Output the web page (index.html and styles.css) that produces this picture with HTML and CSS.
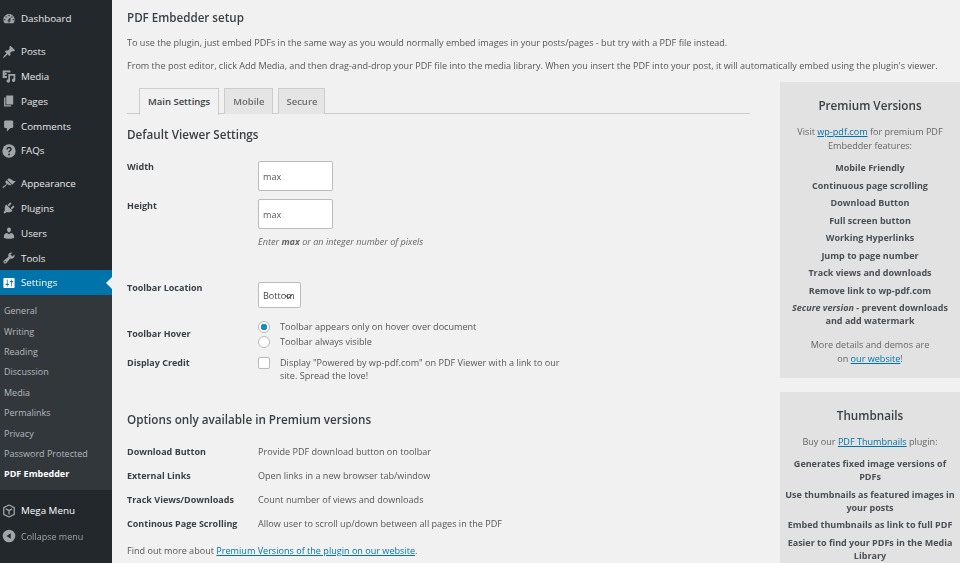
FILE: index.html
```html
<!DOCTYPE html>
<html lang="en">
<head>
<meta charset="utf-8">
<title>PDF Embedder setup</title>
<link rel="stylesheet" href="styles.css">
</head>
<body>
<nav class="sidebar">
  <ul class="menu menu-first">
    <li class="item"><svg class="icon" viewBox="0 0 20 20"><path d="M3.76 16h12.48c1.1-1.37 1.76-3.11 1.76-5 0-4.42-3.58-8-8-8s-8 3.58-8 8c0 1.89.66 3.63 1.76 5zM10 4c.55 0 1 .45 1 1s-.45 1-1 1-1-.45-1-1 .45-1 1-1zM6 6c.55 0 1 .45 1 1s-.45 1-1 1-1-.45-1-1 .45-1 1-1zm8 0c.55 0 1 .45 1 1s-.45 1-1 1-1-.45-1-1 .45-1 1-1zm-5.37 5.55L12 7v6c0 1.1-.9 2-2 2s-2-.9-2-2c0-.57.24-1.08.63-1.45zM4 10c.55 0 1 .45 1 1s-.45 1-1 1-1-.45-1-1 .45-1 1-1zm12 0c.55 0 1 .45 1 1s-.45 1-1 1-1-.45-1-1 .45-1 1-1zm-5 3c0-.55-.45-1-1-1s-1 .45-1 1 .45 1 1 1 1-.45 1-1z"/></svg>Dashboard</li>
  </ul>
  <ul class="menu">
    <li class="item"><svg class="icon" viewBox="0 0 20 20"><path d="M10.44 3.02l1.82-1.82 6.36 6.35-1.83 1.82c-1.05-.68-2.48-.57-3.41.36l-.75.75c-.92.93-1.04 2.35-.35 3.41l-1.83 1.82-2.41-2.41-2.8 2.79c-.42.42-3.38 2.71-3.8 2.29s1.86-3.39 2.28-3.81l2.79-2.79L4.1 9.36l1.83-1.82c1.05.69 2.48.57 3.4-.36l.75-.75c.93-.92 1.05-2.35.36-3.41z"/></svg>Posts</li>
    <li class="item"><svg class="icon" viewBox="0 0 20 20"><path fill-rule="evenodd" d="M1 2h11v3H9V4.500H4V10h3v3H1zM5.500 5.500a1.500 1.500 0 1 1 0 3 1.500 1.500 0 0 1 0-3zM9 7h10v9a2.500 2.500 0 1 1-2.500-2.500V9.500h-5V17a2.500 2.500 0 1 1-2.500-2.500z"/></svg>Media</li>
    <li class="item"><svg class="icon" viewBox="0 0 20 20"><path d="M6 15V2h10v13H6zm-1 1h8v2H3V5h2v11z"/></svg>Pages</li>
    <li class="item"><svg class="icon" viewBox="0 0 20 20"><path d="M5 2h9c1.100 0 2 .9 2 2v7c0 1.100-.9 2-2 2h-2l-5 5v-5H5c-1.100 0-2-.9-2-2V4c0-1.100.9-2 2-2z"/></svg>Comments</li>
    <li class="item"><svg class="icon" viewBox="0 0 20 20"><circle cx="10" cy="10" r="9.500"/><path class="cut" d="M7.300 7.800c0-1.700 1.200-2.700 2.800-2.700s2.700 1 2.700 2.400c0 2.200-2.800 2.100-2.800 4.300"/><circle class="dot" cx="10" cy="15" r="1.300"/></svg>FAQs</li>
  </ul>
  <ul class="menu">
    <li class="item"><svg class="icon" viewBox="0 0 20 20"><path d="M14.480 11.060L7.410 3.990l1.500-1.500c.5-.56 2.300-.47 3.510.32 1.210.8 1.430 1.280 2.910 2.100 1.180.64 2.450 1.260 4.450.85zm-.71.71L6.700 4.700 4.930 6.470c-.39.39-.39 1.020 0 1.410l1.060 1.060c.39.39.39 1.030 0 1.420-.6.6-1.430 1.110-2.210 1.690-.35.26-.7.53-1.010.84C1.430 13.230.4 14.850 1 15.500c.6.6 2.200-.4 3.500-1.780.3-.3.58-.66.84-1.010.58-.78 1.090-1.610 1.690-2.210.39-.39 1.020-.39 1.410 0l1.060 1.060c.39.39 1.020.39 1.410 0z"/></svg>Appearance</li>
    <li class="item"><svg class="icon" viewBox="0 0 20 20"><path d="M13.110 4.360L9.870 7.600 8 5.730l3.240-3.240c.35-.34 1.050-.2 1.560.32.52.51.66 1.210.31 1.550zm-8 1.770l.91-1.120 9.010 9.010-1.190.84c-.71.71-2.630 1.160-3.820 1.160H6.140L4.900 17.260c-.59.59-1.540.59-2.120 0-.59-.58-.59-1.530 0-2.120l1.240-1.240v-3.880c0-1.130.4-3.190 1.090-3.890zm7.260 3.970l3.240-3.240c.34-.35 1.040-.21 1.550.31.52.51.66 1.210.31 1.550l-3.240 3.250z"/></svg>Plugins</li>
    <li class="item"><svg class="icon" viewBox="0 0 20 20"><path d="M10 9.250c-2.270 0-2.730-3.440-2.730-3.440C7 4.020 7.820 2 9.970 2c2.160 0 2.980 2.020 2.710 3.810 0 0-.41 3.440-2.680 3.440zm0 2.570L12.720 10c2.390 0 4.520 2.330 4.520 4.530v2.490s-3.650 1.130-7.240 1.130c-3.650 0-7.240-1.130-7.240-1.130v-2.490c0-2.250 1.940-4.480 4.470-4.480z"/></svg>Users</li>
    <li class="item"><svg class="icon" viewBox="0 0 20 20"><path d="M16.680 9.770c-1.340 1.340-3.300 1.670-4.950.99l-5.410 6.520c-.99.99-2.590.99-3.580 0s-.99-2.590 0-3.570l6.520-5.420c-.68-1.650-.35-3.610.99-4.950 1.280-1.280 3.120-1.620 4.720-1.060l-2.890 2.890 2.820 2.820 2.860-2.870c.53 1.580.18 3.390-1.080 4.650zM3.810 16.210c.4.39 1.040.39 1.430 0 .4-.4.4-1.040 0-1.430-.39-.4-1.030-.4-1.430 0-.39.39-.39 1.030 0 1.430z"/></svg>Tools</li>
    <li class="item item-active"><svg class="icon" viewBox="0 0 20 20"><path fill-rule="evenodd" d="M18 16V4c0-.55-.45-1-1-1H3c-.55 0-1 .45-1 1v12c0 .55.45 1 1 1h14c.55 0 1-.45 1-1zM8 11h1c.55 0 1 .45 1 1s-.45 1-1 1H8v1.500c0 .28-.22.5-.5.5s-.5-.22-.5-.5V13H6c-.55 0-1-.45-1-1s.45-1 1-1h1V5.500c0-.28.22-.5.5-.5s.5.22.5.5V11zm5-2h-1c-.55 0-1-.45-1-1s.45-1 1-1h1V5.500c0-.28.22-.5.5-.5s.5.22.5.5V7h1c.55 0 1 .45 1 1s-.45 1-1 1h-1v5.500c0 .28-.22.5-.5.5s-.5-.22-.5-.5V9z"/></svg>Settings</li>
  </ul>
  <ul class="submenu">
    <li>General</li>
    <li>Writing</li>
    <li>Reading</li>
    <li>Discussion</li>
    <li>Media</li>
    <li>Permalinks</li>
    <li>Privacy</li>
    <li>Password Protected</li>
    <li class="sub-current">PDF Embedder</li>
  </ul>
  <ul class="menu menu-last">
    <li class="item item-bright"><svg class="icon" viewBox="0 0 20 20"><path class="outline" d="M10 1.500l7.500 3.700v9.600L10 18.500l-7.500-3.700V5.200zM5.500 7L10 9.500 14.500 7M10 9.500V15"/></svg>Mega Menu</li>
    <li class="item item-dim"><svg class="icon" viewBox="0 0 20 20"><path fill-rule="evenodd" d="M10 1a9 9 0 1 1 0 18 9 9 0 0 1 0-18zM12.500 6v8L6.500 10z"/></svg>Collapse menu</li>
  </ul>
</nav>

<main class="content">
  <header class="intro">
    <h1>PDF Embedder setup</h1>
    <p>To use the plugin, just embed PDFs in the same way as you would normally embed images in your posts/pages - but try with a PDF file instead.</p>
    <p>From the post editor, click Add Media, and then drag-and-drop your PDF file into the media library. When you insert the PDF into your post, it will automatically embed using the plugin's viewer.</p>
  </header>

  <div class="columns">
    <section class="settings">
      <div class="tabs">
        <span class="tab tab-active">Main Settings</span>
        <span class="tab">Mobile</span>
        <span class="tab tab-secure">Secure</span>
      </div>

      <h2 class="h-viewer">Default Viewer Settings</h2>

      <div class="row row-input row-width">
        <label>Width</label>
        <div class="field"><span class="input">max</span></div>
      </div>
      <div class="row row-input">
        <label>Height</label>
        <div class="field"><span class="input">max</span><em class="hint">Enter <b>max</b> or an integer number of pixels</em></div>
      </div>
      <div class="row row-select">
        <label>Toolbar Location</label>
        <div class="field"><span class="select">Bottom</span></div>
      </div>
      <div class="row row-hover">
        <label>Toolbar Hover</label>
        <div class="field radios">
          <div class="choice"><span class="radio radio-on"></span>Toolbar appears only on hover over document</div>
          <div class="choice"><span class="radio"></span>Toolbar always visible</div>
        </div>
      </div>
      <div class="row row-credit">
        <label>Display Credit</label>
        <div class="field credit"><span class="check"></span><span class="credit-text">Display "Powered by wp-pdf.com" on PDF Viewer with a link to our site. Spread the love!</span></div>
      </div>

      <h2 class="h-options">Options only available in Premium versions</h2>

      <div class="opt"><label>Download Button</label><span>Provide PDF download button on toolbar</span></div>
      <div class="opt"><label>External Links</label><span>Open links in a new browser tab/window</span></div>
      <div class="opt"><label>Track Views/Downloads</label><span>Count number of views and downloads</span></div>
      <div class="opt"><label>Continous Page Scrolling</label><span>Allow user to scroll up/down between all pages in the PDF</span></div>

      <p class="more">Find out more about <a href="#">Premium Versions of the plugin on our website</a>.</p>
    </section>

    <aside class="side">
      <div class="box box-premium">
        <h3>Premium Versions</h3>
        <p class="lead">Visit <a href="#">wp-pdf.com</a> for premium PDF Embedder features:</p>
        <p class="feat">Mobile Friendly</p>
        <p class="feat">Continuous page scrolling</p>
        <p class="feat">Download Button</p>
        <p class="feat">Full screen button</p>
        <p class="feat">Working Hyperlinks</p>
        <p class="feat">Jump to page number</p>
        <p class="feat">Track views and downloads</p>
        <p class="feat">Remove link to wp-pdf.com</p>
        <p class="feat"><i>Secure version</i> - prevent downloads and add watermark</p>
        <p class="lead lead-end">More details and demos are<br>on <a href="#">our website</a>!</p>
      </div>
      <div class="box box-thumbs">
        <h3>Thumbnails</h3>
        <p class="lead">Buy our <a href="#">PDF Thumbnails</a> plugin:</p>
        <p class="feat">Generates fixed image versions of PDFs</p>
        <p class="feat">Use thumbnails as featured images in your posts</p>
        <p class="feat">Embed thumbnails as link to full PDF</p>
        <p class="feat">Easier to find your PDFs in the Media Library</p>
      </div>
    </aside>
  </div>
</main>
</body>
</html>
```
FILE: styles.css
```css
* { box-sizing: border-box; }
html, body { margin: 0; padding: 0; height: 563px; overflow: hidden; }
body {
  display: flex;
  background: #f1f1f1;
  color: #555;
  font-family: "Open Sans", "Noto Sans", sans-serif;
  font-size: 9.080px;
  filter: blur(0.35px);
}
ul { list-style: none; margin: 0; padding: 0; }
h1, h2, h3, p { margin: 0; }
a { color: #0073aa; }

/* Sidebar */
.sidebar {
  flex: 0 0 112px;
  height: 563px;
  background: #23282d;
  color: #eee;
  font-size: 9.800px;
}
.menu { padding-top: 8px; }
.menu-first { padding-top: 6.500px; }
.menu-last { padding-top: 8px; }
.item {
  display: flex;
  align-items: center;
  gap: 5px;
  height: 24.8px;
  padding-left: 2px;
  color: #e6e8ea;
}
.icon { width: 14px; height: 14px; fill: #a0a5aa; flex: none; }
.icon .cut { fill: none; stroke: #23282d; stroke-width: 2.2; }
.icon .dot { fill: #23282d; }
.icon .outline { fill: none; stroke: #a0a5aa; stroke-width: 1.800; stroke-linejoin: round; }
.item-active {
  position: relative;
  background: #0073aa;
  color: #fff;
}
.item-active .icon { fill: #fff; }
.item-active::after {
  content: "";
  position: absolute;
  right: 0;
  top: 7px;
  border: 6px solid transparent;
  border-left-width: 0;
  border-right-color: #f1f1f1;
}
.item-bright { color: #fff; }
.item-dim { color: #a0a5aa; font-size: 9px; margin-top: 1px; }
.submenu {
  background: #32373c;
  padding: 6px 0 5.400px;
  color: #b4b9be;
  font-size: 9px;
}
.submenu li {
  height: 20.4px;
  line-height: 20.4px;
  padding-left: 4px;
}
.submenu .sub-current { color: #fff; font-weight: 700; }

/* Content */
.content {
  flex: 1;
  min-width: 0;
  padding: 9px 0 0 15px;
}
.intro h1 {
  font-size: 11.600px;
  line-height: 17px;
  font-weight: 600;
  color: #3a3f44;
  margin-bottom: 10px;
}
.intro p {
  line-height: 13px;
  margin-bottom: 10px;
  white-space: nowrap;
}
.columns { display: flex; }
.settings { flex: 0 0 623px; padding-top: 6px; }
.side { flex: 0 0 180px; margin-left: 30px; }

/* Tabs */
.tabs {
  display: flex;
  gap: 5px;
  height: 26px;
  padding-left: 12px;
  border-bottom: 1px solid #ccc;
}
.tab {
  height: 26px;
  padding: 0 8px;
  line-height: 26px;
  background: #e5e5e5;
  border: 1px solid #ccc;
  border-bottom: 0;
  font-size: 9.500px;
  font-weight: 600;
  color: #6b6b6b;
}
.tab-secure { padding: 0 7px; }
.tab-active {
  background: #f1f1f1;
  color: #3a3f44;
  height: 27px;
  position: relative;
  z-index: 1;
}

h2 {
  font-size: 11.700px;
  font-weight: 600;
  color: #3a3f44;
  line-height: 16px;
}
.h-viewer { margin-top: 12px; }

/* Form rows */
.row { display: grid; grid-template-columns: 131px 1fr; }
.row label, .opt label { font-weight: 700; color: #3a3f44; font-size: 9px; line-height: 13px; }
.row-input { padding-top: 8px; }
.row-width { padding-top: 19px; }
.row-width label { line-height: 11px; }
.input {
  display: block;
  width: 75px;
  height: 30px;
  padding: 0 4px;
  line-height: 29px;
  background: #fff;
  border: 1px solid #bbb;
  border-radius: 2px;
  color: #555;
}
.hint { display: block; margin-top: 6px; line-height: 14px; color: #666; }
.hint b { font-weight: 700; }
.row-select { margin-top: 33px; }
.row-select label { line-height: 11px; }
.select {
  display: block;
  position: relative;
  width: 43px;
  height: 26px;
  padding-left: 4px;
  line-height: 25px;
  background: #fff;
  border: 1px solid #bbb;
  border-radius: 2px;
  color: #444;
  white-space: nowrap;
  overflow: hidden;
}
.select::after {
  content: "";
  position: absolute;
  right: 9px;
  top: 10px;
  width: 4px;
  height: 4px;
  border-right: 1px solid #555;
  border-bottom: 1px solid #555;
  transform: rotate(45deg);
}
.row-hover { margin-top: 11px; align-items: center; }
.row-hover label { margin-bottom: 2px; }
.choice { display: flex; align-items: center; height: 15px; }
.radio {
  flex: none;
  width: 12px;
  height: 12px;
  margin-right: 10px;
  border: 1px solid #b4b9be;
  border-radius: 50%;
  background: #fff;
}
.radio-on { background: radial-gradient(circle, #1e8cbe 0 3px, #fff 3.500px); }
.row-credit { margin-top: 8px; }
.row-credit label { line-height: 11px; }
.credit { display: flex; line-height: 12.500px; }
.check {
  flex: none;
  width: 12px;
  height: 12px;
  margin-right: 10px;
  background: #fff;
  border: 1px solid #b4b9be;
  border-radius: 2px;
}
.credit-text { width: 285px; }

/* Options */
.h-options { margin-top: 29px; margin-bottom: 18px; }
.opt { display: grid; grid-template-columns: 131px 1fr; height: 24px; line-height: 13px; }
.more { margin-top: 3px; line-height: 13px; }

/* Side boxes */
.box {
  background: #e2e2e2;
  padding: 14px 4px 0;
  text-align: center;
}
.box-premium { height: 296px; }
.box-thumbs { margin-top: 14px; height: 171px; overflow: hidden; }
.box h3 {
  font-size: 11.700px;
  line-height: 18px;
  font-weight: 600;
  color: #3a3f44;
  margin-bottom: 11px;
}
.lead { line-height: 14px; padding: 0 12px; margin-bottom: 8px; color: #666; }
.lead-end { margin-top: 11px; margin-bottom: 0; }
.feat { font-weight: 700; color: #4a4f54; font-size: 9px; line-height: 13px; margin-bottom: 4.500px; }
```
